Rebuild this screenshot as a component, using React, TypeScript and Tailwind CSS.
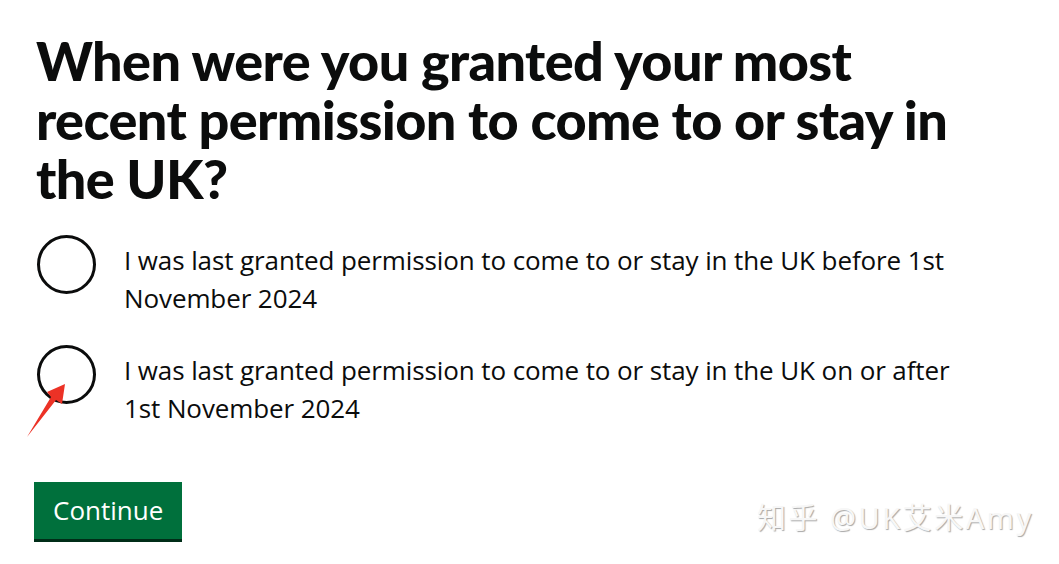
import React from "react";

export default function App() {
  const options = [
    "I was last granted permission to come to or stay in the UK before 1st November 2024",
    "I was last granted permission to come to or stay in the UK on or after 1st November 2024",
  ];
  return (
    <div className="relative w-[1059px] h-[564px] bg-white overflow-hidden text-[#0b0c0c]" style={{ fontFamily: '"Open Sans", "Noto Sans", sans-serif' }}>
      <div className="pl-[36px] pt-[31px] pr-[60px]">
        <h1 className="text-[54px] leading-[59px] font-black tracking-[-0.6px]" style={{ fontFamily: 'Lato, "Open Sans", sans-serif' }}>
          When were you granted your most recent permission to come to or stay in the UK?
        </h1>
        <div className="mt-[27px] flex flex-col gap-[28px]">
          {options.map((o) => (
            <div key={o} className="flex items-start">
              <div className="ml-[1px] w-[59px] h-[59px] shrink-0 rounded-full border-[3.5px] border-[#0b0c0c]" />
              <div className="ml-[28px] mt-[6px] text-[26px] leading-[38px] max-w-[840px] tracking-[-0.1px]">{o}</div>
            </div>
          ))}
        </div>
        <button className="mt-[55px] h-[57px] px-[19px] bg-[#00703c] text-white text-[26px] shadow-[0_3px_0_#002d18] -ml-[2px]">
          Continue
        </button>
      </div>
      <svg className="absolute left-0 top-0" width="120" height="460" viewBox="0 0 120 460">
        <polygon points="27,437 51,397 47,392 65,384 62,404 56,400" fill="#ec3226" />
      </svg>
      <div
        className="absolute left-[757px] top-[496px] text-[29px] tracking-[2.5px] text-[#f7f7f7]"
        style={{ fontFamily: '"Noto Sans", "Noto Sans CJK SC", sans-serif', textShadow: "1px 1px 1px #a8a8a8" }}
      >
        知乎 @UK艾米Amy
      </div>
    </div>
  );
}
